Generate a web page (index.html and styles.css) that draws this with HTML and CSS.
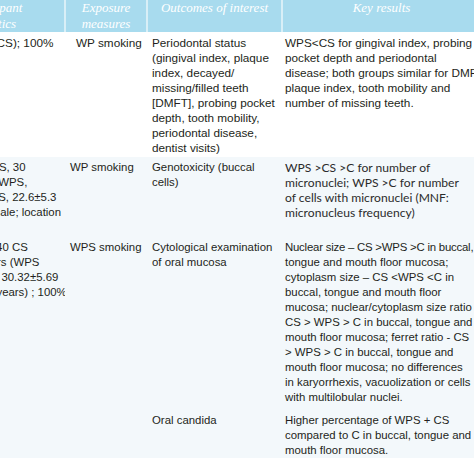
FILE: index.html
```html
<!DOCTYPE html>
<html lang="en">
<head>
<meta charset="utf-8">
<title>Waterpipe smoking studies</title>
<link rel="stylesheet" href="styles.css">
</head>
<body>
<div class="frame">
<table class="studies">
<colgroup><col class="c1"><col class="c2"><col class="c3"><col class="c4"></colgroup>
<thead>
<tr>
<th>Study participant<br>characteristics</th>
<th>Exposure<br>measures</th>
<th>Outcomes of interest</th>
<th>Key results</th>
</tr>
</thead>
<tbody>
<tr class="row-a">
<td class="part"><div>n=45 (15 WPS, 15 CS); 100%</div></td>
<td class="expo">WP smoking</td>
<td class="outc">Periodontal status<br>(gingival index, plaque<br>index, decayed/<br>missing/filled teeth<br>[DMFT], probing pocket<br>depth, tooth mobility,<br>periodontal disease,<br>dentist visits)</td>
<td class="res">WPS&lt;CS for gingival index, probing<br>pocket depth and periodontal<br>disease; both groups similar for DMFT,<br>plaque index, tooth mobility and<br>number of missing teeth.</td>
</tr>
<tr class="row-b">
<td class="part"><div>120 (30 WPS), 30 CS, 30</div><div>C) age 22.4±4.1 for WPS,</div><div>(21.35±3.81) y for CS, 22.6±5.3</div><div>and C; total 100% male; location</div><div>Iran</div></td>
<td class="expo">WP smoking</td>
<td class="outc">Genotoxicity (buccal<br>cells)</td>
<td class="res alt">WPS &gt;CS &gt;C for number of<br>micronuclei; WPS &gt;C for number<br>of cells with micronuclei (MNF:<br>micronucleus frequency)</td>
</tr>
<tr class="row-b">
<td class="part" rowspan="2"><div>N = 120 (40 WPS), 40 CS</div><div>C); aged 18–45 years (WPS</div><div>29.14±6.02 yrs), CS 30.32±5.69</div><div>NS/C = 28.76±5.11 years) ; 100%</div><div>male</div></td>
<td class="expo" rowspan="2">WPS smoking</td>
<td class="outc">Cytological examination<br>of oral mucosa</td>
<td class="res"><span class="tight">Nuclear size – CS &gt;WPS &gt;C in buccal,</span><br>tongue and mouth floor mucosa;<br>cytoplasm size – CS &lt;WPS &lt;C in<br>buccal, tongue and mouth floor<br>mucosa; nuclear/cytoplasm size ratio<br>CS &gt; WPS &gt; C in buccal, tongue and<br>mouth floor mucosa; ferret ratio - CS<br>&gt; WPS &gt; C in buccal, tongue and<br>mouth floor mucosa; no differences<br>in karyorrhexis, vacuolization or cells<br>with multilobular nuclei.</td>
</tr>
<tr class="row-b sub">
<td class="outc">Oral candida</td>
<td class="res">Higher percentage of WPS + CS<br>compared to C in buccal, tongue and<br>mouth floor mucosa.</td>
</tr>
</tbody>
</table>
</div>
</body>
</html>
```

FILE: styles.css
```css
html, body {
  margin: 0;
  padding: 0;
  background: #ffffff;
}

body {
  width: 474px;
  height: 474px;
  overflow: hidden;
}

.frame {
  width: 474px;
  height: 474px;
  overflow: hidden;
}

.studies {
  border-collapse: collapse;
  table-layout: fixed;
  width: 585px;
  margin-left: -105px;
  font-family: "Liberation Sans", Arial, sans-serif;
  font-size: 12px;
  line-height: 15px;
  color: #231f20;
}

.c1 { width: 170px; }
.c2 { width: 82px; }
.c3 { width: 135px; }
.c4 { width: 198px; }

.studies th {
  background: #a8dbee;
  color: #ffffff;
  font-family: "Liberation Serif", "Times New Roman", serif;
  font-style: italic;
  font-weight: normal;
  font-size: 13px;
  line-height: 16px;
  height: 32px;
  padding: 0;
  vertical-align: top;
  text-align: center;
  border-left: 2px solid rgba(255, 255, 255, 0.55);
}

.studies th:first-child {
  border-left: none;
  padding-right: 4px;
}

.studies td {
  vertical-align: top;
  white-space: nowrap;
  overflow: hidden;
  padding: 3px 0 2px 5px;
}

.studies td.part {
  padding-left: 2px;
}

.studies td.res {
  padding-left: 3px;
}

.row-a {
  background: #ffffff;
  font-size: 11.75px;
}

.row-b {
  background: #f3f8fb;
  font-size: 11.4px;
}

.row-a .expo { padding-left: 11px; }
.row-b .expo { padding-left: 5px; }

.row-b .res.alt {
  font-family: Lato, "Liberation Sans", sans-serif;
  font-size: 12.1px;
  color: #2b2b2b;
}

.tight {
  letter-spacing: -0.22px;
}

.sub td {
  padding-top: 6px;
  padding-bottom: 0;
}
```
